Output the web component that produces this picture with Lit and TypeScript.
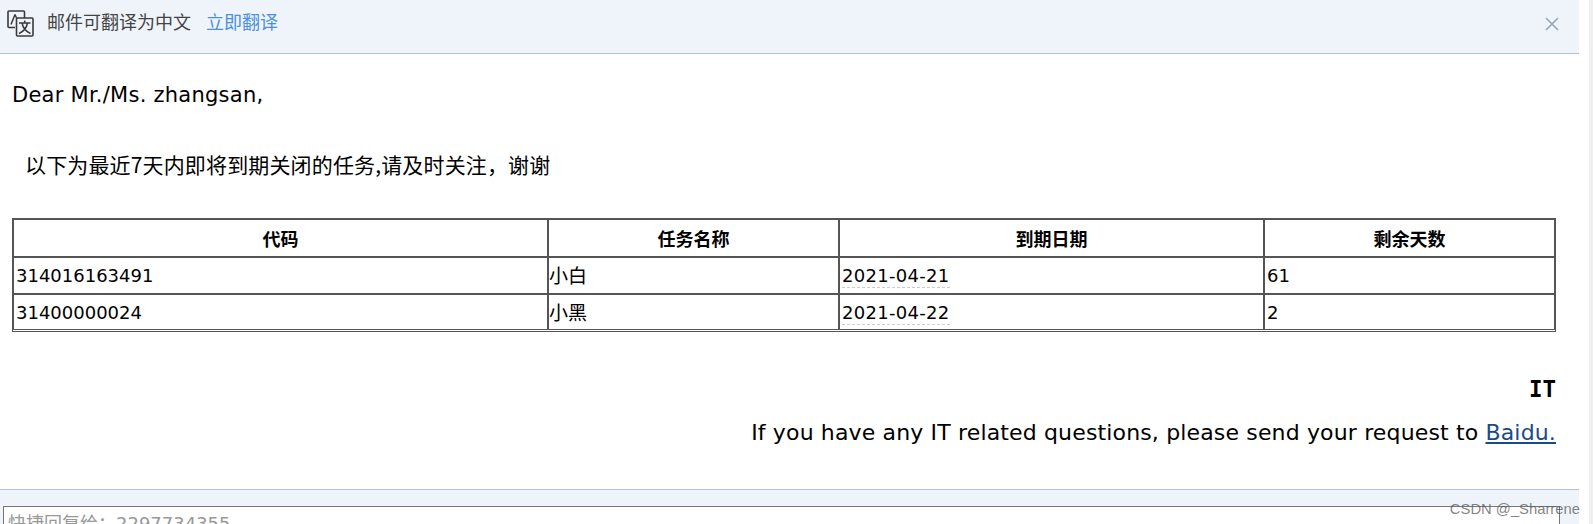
import { LitElement, css, html } from "lit";
import { customElement } from "lit/decorators.js";

const rows = [
  { code: "314016163491", name: "小白", due: "2021-04-21", left: "61" },
  { code: "31400000024", name: "小黑", due: "2021-04-22", left: "2" }
];

@customElement("app-root")
export class AppRoot extends LitElement {
  static styles = css`
    :host {
      display: block;
      position: relative;
      width: 1593px;
      height: 524px;
      overflow: hidden;
      background: #fff;
      font-family: "DejaVu Sans", "Noto Sans CJK SC", sans-serif;
      color: #000;
    }

    .page {
      display: flex;
      height: 100%;
    }

    .main {
      display: flex;
      flex-direction: column;
      width: 1579px;
      flex: none;
    }

    .gutter {
      flex: 1;
    }

    .scrollbar {
      width: 4px;
      background: #f0f0f0;
    }

    .banner {
      display: flex;
      align-items: center;
      box-sizing: border-box;
      height: 54px;
      padding: 0 19px 6px 7px;
      border-bottom: 1px solid #aec4e0;
      background: #eff4fb;
      font-family: "Noto Sans CJK SC", sans-serif;
      font-size: 18px;
      color: #444;
    }

    .banner svg {
      flex: none;
    }

    .banner .tip,
    .banner .action {
      padding-bottom: 6px;
    }

    .banner .tip {
      margin-left: 13px;
    }

    .banner .action {
      margin-left: 15px;
      color: #4a90e2;
    }

    .banner .close {
      margin-left: auto;
    }

    .body {
      flex: 1;
      padding: 0 23px 0 12px;
      font-size: 18px;
    }

    .greeting {
      margin: 0;
      padding-top: 29px;
      line-height: 24px;
      font-size: 21px;
      letter-spacing: 0.25px;
    }

    .intro {
      margin: 0;
      padding: 45px 0 0 13px;
      line-height: 24px;
      font-size: 21px;
      letter-spacing: 0.15px;
      font-family: "Noto Sans CJK SC", sans-serif;
    }

    table {
      box-sizing: border-box;
      width: 1544px;
      margin: 42px 0 0;
      padding-bottom: 1px;
      border: 1px solid #555;
      border-spacing: 0;
      table-layout: fixed;
      font-size: 18px;
    }

    th,
    td {
      box-sizing: border-box;
      padding: 0 2px;
      border: 1px solid #555;
      font-weight: 400;
      text-align: left;
      overflow: hidden;
      white-space: nowrap;
    }

    th {
      height: 38px;
      font-family: "Noto Sans CJK SC", sans-serif;
      font-weight: 700;
      text-align: center;
    }

    td {
      height: 37px;
      line-height: 24px;
    }

    tbody tr:last-child td {
      height: 36px;
      padding-top: 1px;
    }

    .due {
      display: inline-block;
      line-height: 22px;
      letter-spacing: 0.3px;
      border-bottom: 1px dashed #ccc;
    }

    td.cjk {
      padding: 0 0 2px;
      font-family: "Noto Sans CJK SC", sans-serif;
      font-size: 19px;
    }

    .sign {
      margin: 0;
      text-align: right;
      line-height: 24px;
    }

    .sign.owner {
      margin-top: 45px;
      font-family: "DejaVu Sans Mono", monospace;
      font-size: 22.5px;
      font-weight: 700;
    }

    .sign.help {
      margin-top: 20px;
      font-size: 22px;
      letter-spacing: 0.15px;
    }

    .sign a {
      color: #1a4a8a;
      text-decoration: underline;
    }

    .reply {
      box-sizing: border-box;
      height: 35px;
      padding: 16px 19px 0 3px;
      border-top: 1px solid #aec4e0;
      background: #eff4fb;
    }

    .reply-box {
      box-sizing: border-box;
      height: 40px;
      padding: 5px 0 0 4px;
      border: 1px solid #777;
      background: #fff;
      font-size: 18px;
      line-height: 24px;
      color: #999;
      font-family: "DejaVu Sans", "Noto Sans CJK SC", sans-serif;
    }

    .watermark {
      position: absolute;
      right: 13px;
      top: 500px;
      font-family: "Liberation Sans", sans-serif;
      font-size: 14.8px;
      line-height: 18px;
      color: rgba(90, 90, 90, 0.75);
      white-space: nowrap;
    }
  `;

  render() {
    return html`
      <div class="page">
        <div class="main">
          <div class="banner">
            ${this.renderTranslateIcon()}
            <span class="tip">邮件可翻译为中文</span>
            <span class="action">立即翻译</span>
            <svg class="close" width="16" height="16" viewBox="0 0 16 16" fill="none" stroke="#99a5b3" stroke-width="1.6">
              <path d="M2 2 L14 14 M14 2 L2 14" />
            </svg>
          </div>
          <div class="body">
            <p class="greeting">Dear Mr./Ms. zhangsan,</p>
            <p class="intro">以下为最近7天内即将到期关闭的任务,请及时关注，谢谢</p>
            <table>
              <colgroup>
                <col style="width:535px" />
                <col style="width:291px" />
                <col style="width:425px" />
                <col style="width:291px" />
              </colgroup>
              <thead>
                <tr>
                  <th>代码</th>
                  <th>任务名称</th>
                  <th>到期日期</th>
                  <th>剩余天数</th>
                </tr>
              </thead>
              <tbody>
                ${rows.map(
                  row => html`
                    <tr>
                      <td>${row.code}</td>
                      <td class="cjk">${row.name}</td>
                      <td><span class="due">${row.due}</span></td>
                      <td>${row.left}</td>
                    </tr>
                  `
                )}
              </tbody>
            </table>
            <p class="sign owner">IT</p>
            <p class="sign help">
              If you have any IT related questions, please send your request to <a href="#">Baidu.</a>
            </p>
          </div>
          <div class="reply">
            <div class="reply-box">快捷回复给：2297734355</div>
          </div>
        </div>
        <div class="gutter"></div>
        <div class="scrollbar"></div>
      </div>
      <div class="watermark">CSDN @_Sharrene</div>
    `;
  }

  renderTranslateIcon() {
    return html`
      <svg width="27" height="28" viewBox="0 0 27 28" fill="none" stroke="#3a3a3a" stroke-width="1.6">
        <path d="M8 17.5 H2 Q1 17.5 1 16.5 V1.8 Q1 1 2 1 H16.5 Q17.5 1 17.5 2 V8" />
        <path d="M10.5 8 H25 Q26 8 26 9 V25 Q26 26 25 26 H10.5 Q9.5 26 9.5 25 V9 Q9.5 8 10.5 8 Z" />
        <path d="M8 4.5 L4 14.5 M8 4.5 L9.5 8" stroke-width="1.5" />
        <path d="M12 13 H23.5 M17.7 10.5 V13 M15 13 C16 18 19 21.5 23.5 23.5 M20.5 13 C19.5 18 16.5 21.5 12 23.5" stroke-width="1.5" />
      </svg>
    `;
  }
}
